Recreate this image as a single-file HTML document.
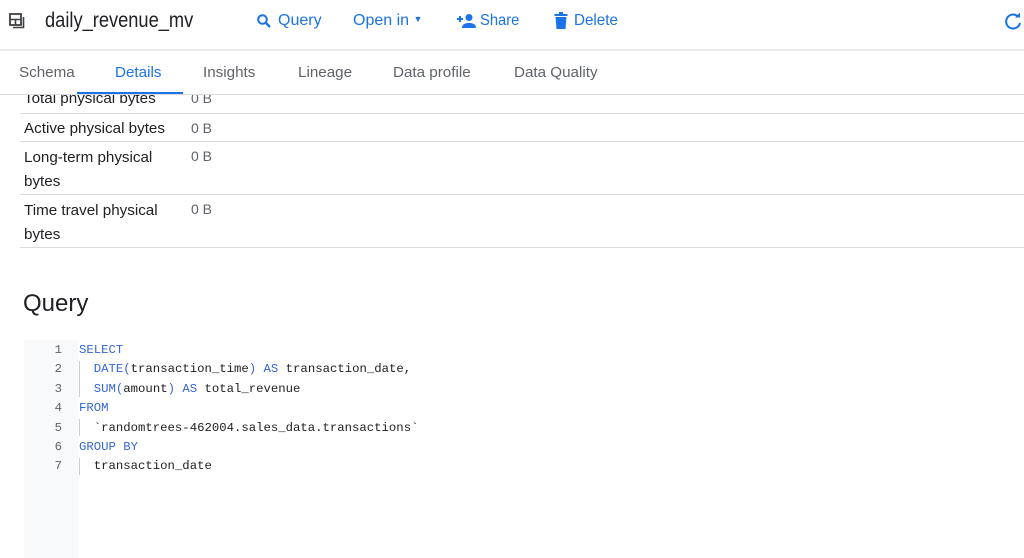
<!DOCTYPE html>
<html><head><style>
body{margin:0;width:1024px;height:558px;overflow:hidden;background:#fff;font-family:"Liberation Sans",sans-serif;color:#202124;position:relative}
.a{position:absolute;white-space:nowrap}
.blue{color:#1a73e8}
.hr{position:absolute;left:0;right:0;height:1px;background:#dadce0}
.code{font-family:"Liberation Mono",monospace;font-size:12.3px;line-height:19.4px}
.k{color:#3367d6}
.t{font-size:15.2px}
</style></head><body>
<svg class="a" style="left:8px;top:12px" width="18" height="18" viewBox="0 0 18 18"><rect x="2" y="2" width="11" height="11" fill="none" stroke="#3c4043" stroke-width="1.8"/><path d="M2 7.5H13M7.5 7.5V13" stroke="#3c4043" stroke-width="1.6"/><path d="M5 15.5H15.5V5" fill="none" stroke="#3c4043" stroke-width="1.6"/></svg>
<div class="a" style="left:45px;top:9px;font-size:21px;transform:scaleX(0.87);transform-origin:left">daily_revenue_mv</div>
<svg class="a" style="left:256px;top:13px" width="16" height="16" viewBox="0 0 16 16"><circle cx="6.5" cy="6.5" r="4.3" fill="none" stroke="#1a73e8" stroke-width="2"/><path d="M9.8 9.8L14 14" stroke="#1a73e8" stroke-width="2.4"/></svg>
<div class="a blue" style="left:278px;top:12px;font-size:16px">Query</div>
<div class="a blue" style="left:353px;top:12px;font-size:16px">Open in <span style="font-size:9px;vertical-align:3px">▼</span></div>
<svg class="a" style="left:457px;top:13px" width="20" height="16" viewBox="0 0 20 16"><path d="M0 6h6M3 3v6" stroke="#1a73e8" stroke-width="2"/><circle cx="12" cy="4.5" r="3.5" fill="#1a73e8"/><path d="M5 15c0-4 3.5-5 7-5s7 1 7 5z" fill="#1a73e8"/></svg>
<div class="a blue" style="left:480px;top:12px;font-size:16px;transform:scaleX(0.92);transform-origin:left">Share</div>
<svg class="a" style="left:554px;top:12px" width="14" height="17" viewBox="0 0 14 17"><rect x="0.5" y="2" width="13" height="2" fill="#1a73e8"/><rect x="5" y="0" width="4" height="2" fill="#1a73e8"/><path d="M1.5 5h11l-1 12h-9z" fill="#1a73e8"/></svg>
<div class="a blue" style="left:574px;top:12px;font-size:16px;transform:scaleX(0.95);transform-origin:left">Delete</div>
<svg class="a" style="left:1003px;top:11px" width="20" height="20" viewBox="0 0 20 20"><path d="M15.5 6A7 7 0 1 0 17 12" fill="none" stroke="#1a73e8" stroke-width="2"/><path d="M12 6.5h5v-5z" fill="#1a73e8"/></svg>
<div class="hr" style="top:49px;height:2px;background:#e8eaed"></div>
<div class="a t" style="left:19px;top:64px;color:#5f6368">Schema</div>
<div class="a blue t" style="left:115px;top:64px">Details</div>
<div class="a" style="left:77px;top:92px;width:106px;height:3px;background:#1a73e8"></div>
<div class="a t" style="left:203px;top:64px;color:#5f6368">Insights</div>
<div class="a t" style="left:298px;top:64px;color:#5f6368">Lineage</div>
<div class="a t" style="left:393px;top:64px;color:#5f6368">Data profile</div>
<div class="a t" style="left:514px;top:64px;color:#5f6368">Data Quality</div>
<div class="hr" style="top:94px"></div>
<div style="position:absolute;left:0;top:95px;width:1024px;height:18px;overflow:hidden">
<div class="a t" style="left:24px;top:-5px">Total physical bytes</div>
<div class="a" style="left:191px;top:-5px;font-size:14px;color:#5f6368">0 B</div></div>
<div class="hr" style="top:113px;left:20px"></div>
<div class="a t" style="left:24px;top:120px">Active physical bytes</div>
<div class="a" style="left:191px;top:120px;font-size:14px;color:#5f6368">0 B</div>
<div class="hr" style="top:141px;left:20px"></div>
<div class="a t" style="left:24px;top:146px;line-height:24px">Long-term physical<br>bytes</div>
<div class="a" style="left:191px;top:148px;font-size:14px;color:#5f6368">0 B</div>
<div class="hr" style="top:194px;left:20px"></div>
<div class="a t" style="left:24px;top:199px;line-height:24px">Time travel physical<br>bytes</div>
<div class="a" style="left:191px;top:201px;font-size:14px;color:#5f6368">0 B</div>
<div class="hr" style="top:247px;left:20px"></div>
<div class="a" style="left:23px;top:290px;font-size:24px">Query</div>
<div class="a" style="left:24px;top:340px;width:54px;height:218px;background:#f8f9fa"></div>
<div class="a code" style="left:24px;top:341px;width:38px;text-align:right;color:#5f6368">1<br>2<br>3<br>4<br>5<br>6<br>7</div>
<div class="a" style="left:79px;top:361px;width:1px;height:36px;background:#ccc"></div>
<div class="a" style="left:79px;top:419px;width:1px;height:17px;background:#ccc"></div>
<div class="a" style="left:79px;top:458px;width:1px;height:17px;background:#ccc"></div>
<div class="a code" style="left:79px;top:341px;color:#202124"><span class="k">SELECT</span><br>&nbsp;&nbsp;<span class="k">DATE(</span>transaction_time<span class="k">)</span> <span class="k">AS</span> transaction_date,<br>&nbsp;&nbsp;<span class="k">SUM(</span>amount<span class="k">)</span> <span class="k">AS</span> total_revenue<br><span class="k">FROM</span><br>&nbsp;&nbsp;`randomtrees-462004.sales_data.transactions`<br><span class="k">GROUP BY</span><br>&nbsp;&nbsp;transaction_date</div>
</body></html>
